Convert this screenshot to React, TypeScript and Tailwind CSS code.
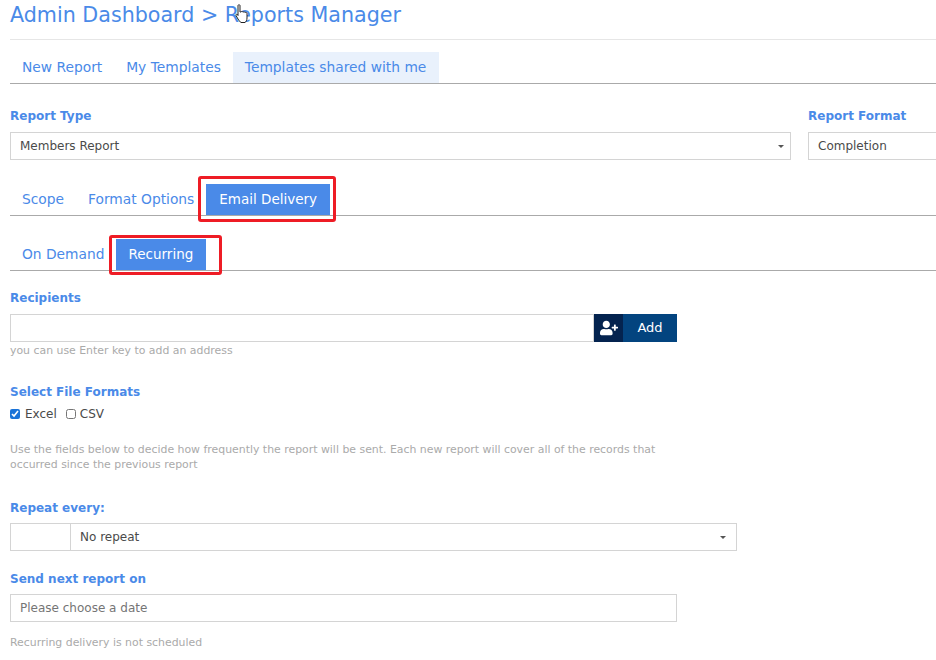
import { FaUserPlus } from "react-icons/fa";

function Tab({ label, active, shaded, tight }: { label: string; active?: boolean; shaded?: boolean; tight?: boolean }) {
  return (
    <div
      className={`h-[31px] flex items-center ${tight ? "-ml-px" : ""} ${
        active
          ? "px-[13px] text-[13.5px] bg-[#4a8ae8] text-white"
          : shaded
            ? "pl-3 pr-[13px] text-[13.8px] bg-[#e9f1fc] text-[#4a8ae8]"
            : "px-3 text-[13.8px] text-[#4a8ae8]"
      }`}
    >
      {label}
    </div>
  );
}

function Label({ children }: { children: string }) {
  return <div className="text-[12px] font-bold leading-[14px] text-[#4a8ae8]">{children}</div>;
}

function Caret() {
  return <div className="w-0 h-0 border-x-[3px] border-x-transparent border-t-[3px] border-t-[#555]" />;
}

export default function App() {
  return (
    <div className="relative w-[936px] h-[660px] overflow-hidden bg-white pl-[10px] font-['DejaVu_Sans',sans-serif]">
      {/* Header */}
      <div className="h-[40px] border-b border-[#e6e6e6]">
        <h1 className="text-[20.65px] leading-[30px] text-[#4a8ae8]">Admin Dashboard &gt; Reports Manager</h1>
      </div>

      {/* Top tabs */}
      <div className="mt-[12px] flex border-b border-[#aaa] h-[32px]">
        <Tab label="New Report" />
        <Tab label="My Templates" />
        <Tab label="Templates shared with me" shaded />
      </div>

      {/* Report type and format */}
      <div className="mt-[25px] flex gap-[17px]">
        <div className="w-[781px] shrink-0">
          <Label>Report Type</Label>
          <div className="mt-[9px] h-[28px] border border-[#d4d4d4] pl-[9px] pr-[6px] flex items-center justify-between text-[12px] text-[#4a4a4a]">
            <span>Members Report</span>
            <Caret />
          </div>
        </div>
        <div className="w-[200px] shrink-0">
          <Label>Report Format</Label>
          <div className="mt-[9px] h-[28px] border border-[#d4d4d4] pl-[9px] flex items-center text-[12px] text-[#4a4a4a]">
            Completion
          </div>
        </div>
      </div>

      {/* Report tabs */}
      <div className="mt-[24px] flex h-[32px] border-b border-[#aaa]">
        <Tab label="Scope" />
        <Tab label="Format Options" />
        <Tab label="Email Delivery" active />
      </div>

      {/* Delivery tabs */}
      <div className="mt-[23px] flex h-[32px] border-b border-[#aaa]">
        <Tab label="On Demand" />
        <Tab label="Recurring" active tight />
      </div>

      {/* Recipients */}
      <div className="mt-[20px] w-[667px]">
        <Label>Recipients</Label>
        <div className="mt-[9px] flex h-[28px]">
          <div className="flex-1 border border-[#d4d4d4]" />
          <div className="w-[29px] bg-[#04234f] flex items-center justify-center text-white">
            <FaUserPlus className="text-[18px]" />
          </div>
          <div className="w-[54px] bg-[#03447f] flex items-center justify-center text-white text-[13px]">Add</div>
        </div>
        <div className="mt-[2px] text-[10.9px] leading-[14px] text-[#aaa]">you can use Enter key to add an address</div>
      </div>

      {/* File formats */}
      <div className="mt-[27px]">
        <Label>Select File Formats</Label>
        <div className="mt-[7px] flex items-center h-[16px] text-[12px] text-[#4a4a4a]">
          <input type="checkbox" defaultChecked className="w-[10px] h-[10px] accent-[#1a73d8]" />
          <span className="ml-[5px]">Excel</span>
          <input type="checkbox" className="ml-[9px] w-[10px] h-[10px]" />
          <span className="ml-[4px]">CSV</span>
        </div>
        <p className="mt-[20px] w-[667px] text-[10.9px] leading-[15px] text-[#aaa]">
          Use the fields below to decide how frequently the report will be sent. Each new report will cover all of the records that occurred since the previous report
        </p>
      </div>

      {/* Repeat */}
      <div className="mt-[29px]">
        <Label>Repeat every:</Label>
        <div className="mt-[8px] w-[727px] h-[28px] flex border border-[#d4d4d4] text-[12px] text-[#4a4a4a]">
          <div className="w-[60px] border-r border-[#d4d4d4]" />
          <div className="flex-1 pl-[9px] pr-[10px] flex items-center justify-between">
            <span>No repeat</span>
            <Caret />
          </div>
        </div>
      </div>

      {/* Next report */}
      <div className="mt-[21px]">
        <Label>Send next report on</Label>
        <div className="mt-[8px] w-[667px] h-[28px] border border-[#d4d4d4] pl-[9px] flex items-center text-[12px] text-[#757575]">
          Please choose a date
        </div>
        <div className="mt-[14px] text-[10.9px] leading-[14px] text-[#aaa]">Recurring delivery is not scheduled</div>
      </div>

      {/* Red annotation boxes */}
      <div className="absolute left-[198px] top-[176px] w-[138px] h-[46px] rounded-[3px] border-[3px] border-[#ee1c25]" />
      <div className="absolute left-[109px] top-[235px] w-[113px] h-[40px] rounded-[3px] border-[3px] border-[#ee1c25]" />

      {/* Mouse pointer */}
      <svg className="absolute left-[235px] top-[4px]" width="14" height="20" viewBox="0 0 14 20">
        <path
          d="M3 1.500c0-1 2-1 2 0V8l1 0c.5-.8 1.700-.6 2 .2.5-.6 1.700-.5 2 .3.600-.4 2-.1 2 1V14c0 2-1 4-2 4.500H6C5 18 4 16.500 3 15L1 11.500c-.5-1 .8-1.800 1.500-1L3 11.500z"
          fill="#fff"
          stroke="#222"
          strokeWidth="1"
        />
      </svg>
    </div>
  );
}
